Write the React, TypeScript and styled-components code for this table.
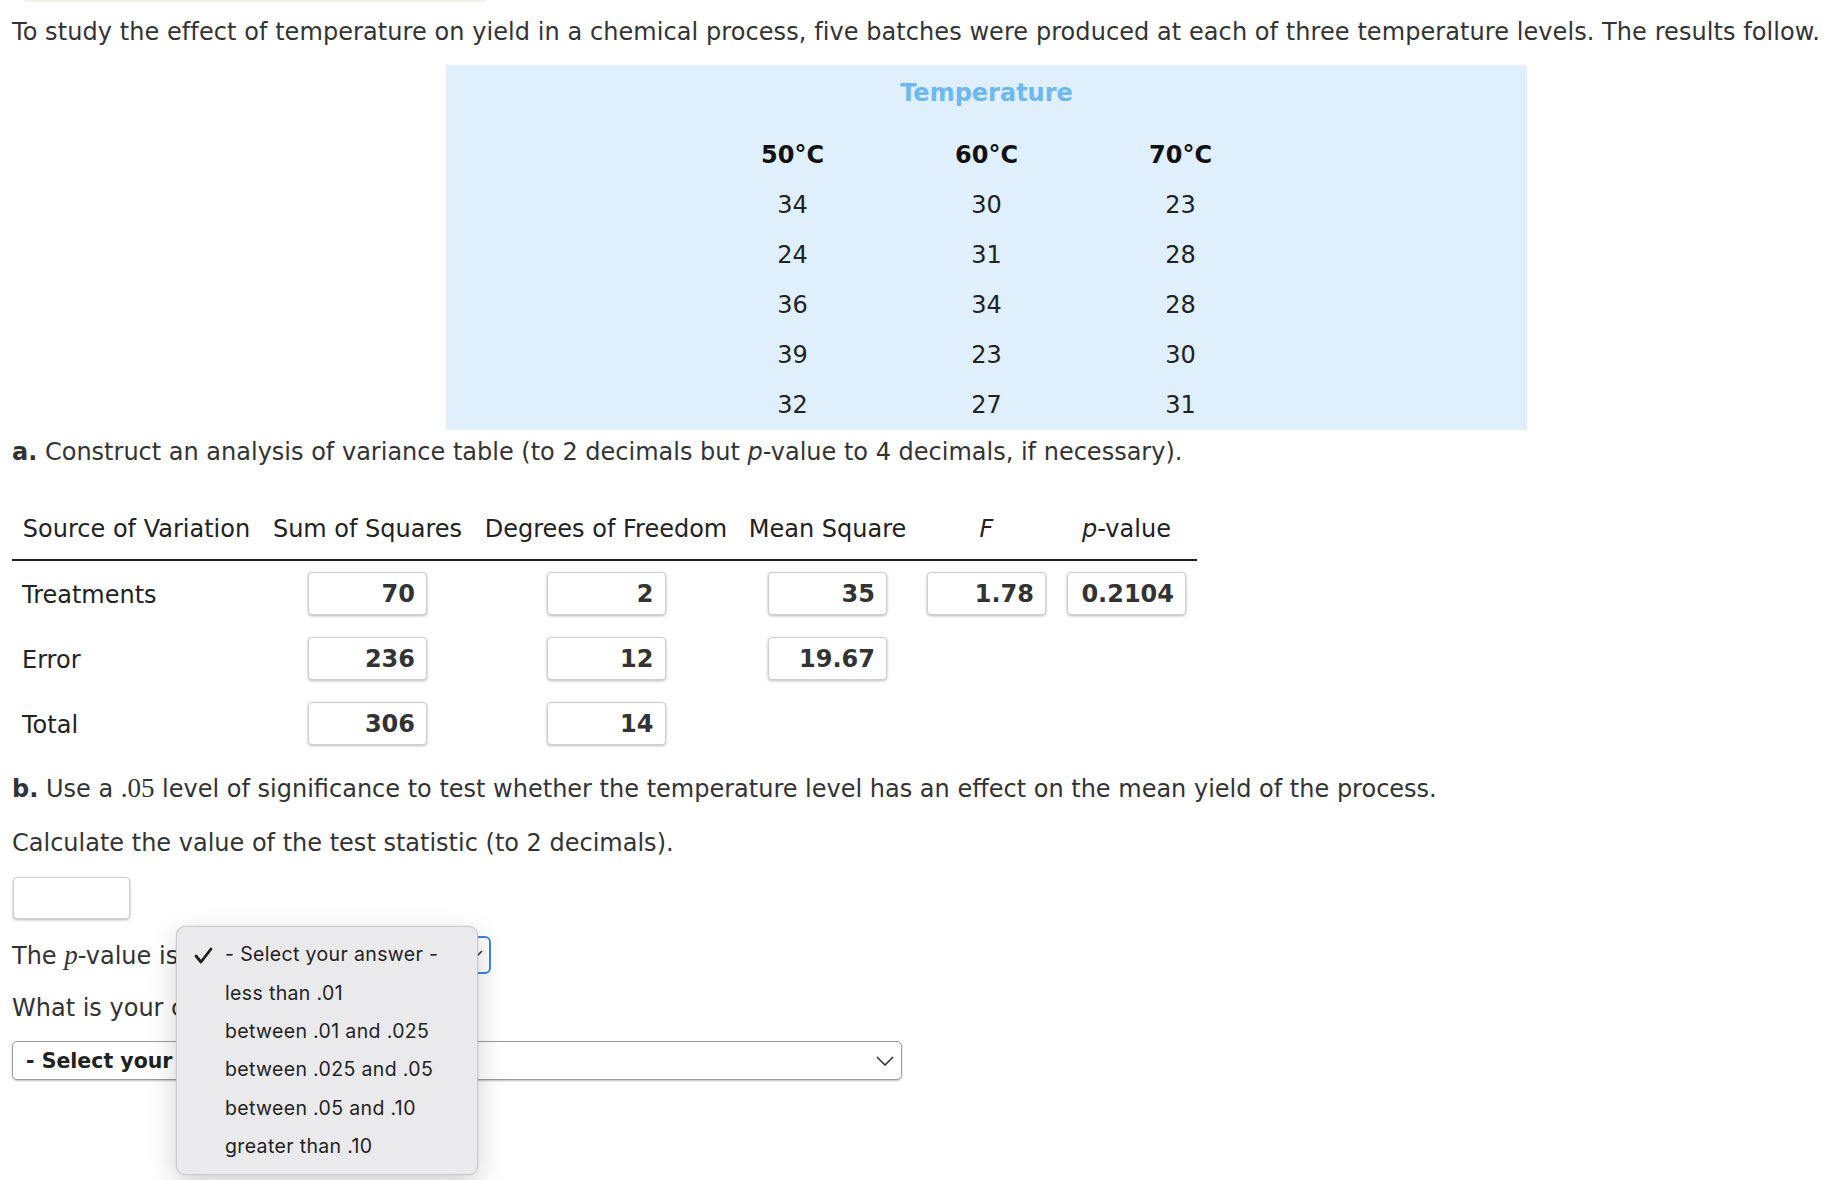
import React from "react";
import styled, { createGlobalStyle } from "styled-components";

const Global = createGlobalStyle`
  html, body { margin: 0; padding: 0; background: #fff; }
  body {
    font-family: "DejaVu Sans", Verdana, sans-serif;
    font-size: 24px;
    color: #333;
  }
  * { box-sizing: border-box; }
`;

const Page = styled.div`
  width: 1842px;
  height: 1180px;
  overflow: hidden;
  padding-left: 12px;
`;

const TopEdge = styled.div`
  margin-left: 13px;
  width: 460px;
  height: 2px;
  background: #eef2ea;
`;

const Para = styled.p<{ $mt: number }>`
  margin: ${(p) => p.$mt}px 0 0;
  line-height: 30px;
  white-space: nowrap;
`;

const Intro = styled(Para)`
  letter-spacing: 0.07px;
`;

const Math = styled.span<{ $italic?: boolean }>`
  font-family: "Liberation Serif", "DejaVu Serif", serif;
  font-size: 27px;
  font-style: ${(p) => (p.$italic ? "italic" : "normal")};
`;

const DataBox = styled.div`
  margin: 18px 0 0 434px;
  width: 1081px;
  height: 365px;
  background: #dfeffc;
  padding-top: 3px;
`;

const DataTitle = styled.div`
  line-height: 50px;
  text-align: center;
  font-weight: bold;
  color: #6cb8ef;
`;

const DataGrid = styled.div`
  margin-top: 12px;
  display: grid;
  grid-template-columns: repeat(3, 194px);
  grid-auto-rows: 50px;
  justify-content: center;
  align-items: center;
  text-align: center;
`;

const DataHead = styled.div`
  font-weight: bold;
  color: #111;
`;

const DataCell = styled.div`
  color: #222;
`;

const Anova = styled.div`
  margin-top: 30px;
  width: 1185px;
  display: grid;
  grid-template-columns: 249px 213px 264px 179px 139px 141px;
`;

const HeadCell = styled.div<{ $italic?: boolean }>`
  height: 64px;
  padding-top: 2px;
  display: flex;
  align-items: center;
  justify-content: center;
  border-bottom: 2px solid #1e1e1e;
  white-space: nowrap;
  font-style: ${(p) => (p.$italic ? "italic" : "normal")};
  color: #222;
`;

const RowLabel = styled.div`
  height: 65px;
  display: flex;
  align-items: center;
  padding: 2px 0 0 10px;
  color: #222;
`;

const Cell = styled.div`
  height: 65px;
  display: flex;
  align-items: center;
  justify-content: center;
`;

const ValueBox = styled.div`
  width: 119px;
  height: 43px;
  border: 1px solid #cfcfcf;
  border-radius: 4px;
  box-shadow: 0 1px 3px rgba(0, 0, 0, 0.28);
  background: #fff;
  display: flex;
  align-items: center;
  justify-content: flex-end;
  padding: 1px 11px 0 0;
  font-weight: bold;
  color: #333;
`;

const EmptyBox = styled(ValueBox)`
  margin: 19px 0 0 1px;
  width: 117px;
  height: 42px;
`;

const PRow = styled.div`
  position: relative;
  margin-top: 17px;
  height: 38px;
  display: flex;
  align-items: center;
`;

const PLabel = styled.div`
  width: 178px;
  flex: none;
  white-space: nowrap;
  line-height: 30px;
`;

const InlineSelect = styled.div`
  width: 301px;
  height: 38px;
  border: 2px solid #3d87d8;
  border-radius: 6px;
  display: flex;
  align-items: center;
  justify-content: flex-end;
  padding-right: 6px;
  background: #fff;
`;

const WideSelect = styled.div`
  margin-top: 18px;
  width: 890px;
  height: 39px;
  border: 1px solid #9a9a9a;
  border-radius: 5px;
  box-shadow: 0 1px 2px rgba(0, 0, 0, 0.25);
  display: flex;
  align-items: center;
  justify-content: space-between;
  padding: 0 7px 0 13px;
  font-weight: bold;
  font-size: 20.5px;
  color: #222;
`;

const Menu = styled.div`
  position: absolute;
  left: 164px;
  top: -10px;
  width: 302px;
  height: 249px;
  padding: 8px 0 0;
  background: #eaeaec;
  border: 1px solid #c9c9cb;
  border-radius: 9px;
  box-shadow: 0 10px 30px rgba(0, 0, 0, 0.18), 0 0 2px rgba(0, 0, 0, 0.12);
  font-family: Inter, "Liberation Sans", sans-serif;
  font-size: 19.5px;
  color: #222;
  z-index: 2;
`;

const MenuItem = styled.div`
  height: 38.4px;
  display: flex;
  align-items: center;
  padding-left: 48px;
  position: relative;
  white-space: nowrap;
  letter-spacing: 0.35px;
`;

const Check = styled.svg`
  position: absolute;
  left: 17px;
  top: 12px;
`;

const Chevron = () => (
  <svg width="18" height="10" viewBox="0 0 18 10">
    <polyline points="1,1 9,9 17,1" fill="none" stroke="#333" strokeWidth="1.6" />
  </svg>
);

const temps = [
  [34, 30, 23],
  [24, 31, 28],
  [36, 34, 28],
  [39, 23, 30],
  [32, 27, 31],
];

const options = [
  "- Select your answer -",
  "less than .01",
  "between .01 and .025",
  "between .025 and .05",
  "between .05 and .10",
  "greater than .10",
];

export default function App() {
  return (
    <>
      <Global />
      <Page>
        <TopEdge />
        <Intro $mt={15}>
          To study the effect of temperature on yield in a chemical process, five batches were produced at each of
          three temperature levels. The results follow.
        </Intro>
        <DataBox>
          <DataTitle>Temperature</DataTitle>
          <DataGrid>
            <DataHead>50°C</DataHead>
            <DataHead>60°C</DataHead>
            <DataHead>70°C</DataHead>
            {temps.map((row, i) =>
              row.map((v, j) => <DataCell key={`${i}-${j}`}>{v}</DataCell>)
            )}
          </DataGrid>
        </DataBox>
        <Para $mt={7}>
          <b>a.</b> Construct an analysis of variance table (to 2 decimals but <i>p</i>-value to 4 decimals, if
          necessary).
        </Para>
        <Anova>
          <HeadCell>Source of Variation</HeadCell>
          <HeadCell>Sum of Squares</HeadCell>
          <HeadCell>Degrees of Freedom</HeadCell>
          <HeadCell>Mean Square</HeadCell>
          <HeadCell $italic>F</HeadCell>
          <HeadCell>
            <i>p</i>-value
          </HeadCell>

          <RowLabel>Treatments</RowLabel>
          <Cell><ValueBox>70</ValueBox></Cell>
          <Cell><ValueBox>2</ValueBox></Cell>
          <Cell><ValueBox>35</ValueBox></Cell>
          <Cell><ValueBox>1.78</ValueBox></Cell>
          <Cell><ValueBox>0.2104</ValueBox></Cell>

          <RowLabel>Error</RowLabel>
          <Cell><ValueBox>236</ValueBox></Cell>
          <Cell><ValueBox>12</ValueBox></Cell>
          <Cell><ValueBox>19.67</ValueBox></Cell>
          <Cell />
          <Cell />

          <RowLabel>Total</RowLabel>
          <Cell><ValueBox>306</ValueBox></Cell>
          <Cell><ValueBox>14</ValueBox></Cell>
          <Cell />
          <Cell />
          <Cell />
        </Anova>
        <Para $mt={17}>
          <b>b.</b> Use a <Math>.05</Math> level of significance to test whether the temperature level has an effect on
          the mean yield of the process.
        </Para>
        <Para $mt={24}>Calculate the value of the test statistic (to 2 decimals).</Para>
        <EmptyBox />
        <PRow>
          <PLabel>
            The <Math $italic>p</Math>-value is
          </PLabel>
          <InlineSelect>
            <Chevron />
          </InlineSelect>
          <Menu>
            {options.map((o, i) => (
              <MenuItem key={o}>
                {i === 0 && (
                  <Check width="19" height="17" viewBox="0 0 19 17">
                    <polyline
                      points="2,9 7,15 17,2"
                      fill="none"
                      stroke="#1c1c1c"
                      strokeWidth="2.8"
                      strokeLinecap="round"
                      strokeLinejoin="round"
                    />
                  </Check>
                )}
                {o}
              </MenuItem>
            ))}
          </Menu>
        </PRow>
        <Para $mt={19}>What is your conclusion?</Para>
        <WideSelect>
          <span>- Select your answer -</span>
          <Chevron />
        </WideSelect>
      </Page>
    </>
  );
}
